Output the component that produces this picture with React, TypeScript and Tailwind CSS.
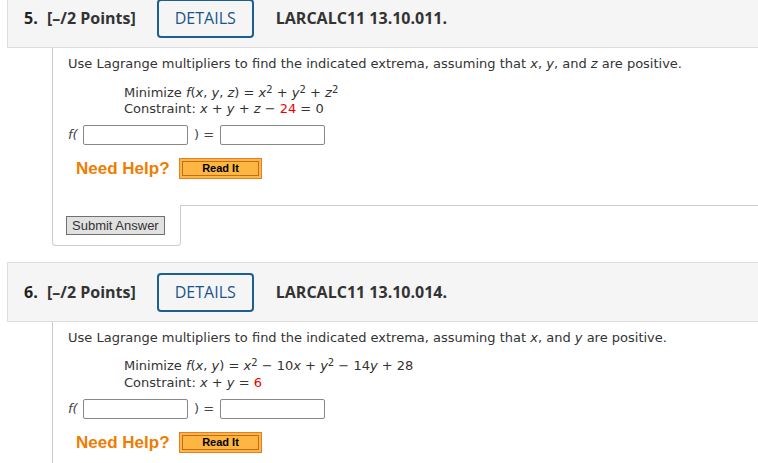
import type { ReactNode } from 'react'

const body = { fontFamily: '"DejaVu Sans", Verdana, sans-serif' }
const head = { fontFamily: '"Open Sans", "Liberation Sans", sans-serif' }
const arial = { fontFamily: '"Liberation Sans", Arial, sans-serif' }

function I({ children }: { children: ReactNode }) {
  return <i>{children}</i>
}

function Sup({ children }: { children: ReactNode }) {
  return <sup className="text-[10px] leading-none relative -top-[4px]">{children}</sup>
}

function Red({ children }: { children: ReactNode }) {
  return <span className="text-[#ee0000]">{children}</span>
}

function Header({ num, code }: { num: string; code: string }) {
  return (
    <div
      className="ml-[7px] h-[60px] bg-[#f5f5f5] border border-r-0 border-[#dddddd] flex items-center text-[16px] text-[#222]"
      style={head}
    >
      <span className="ml-[16px] font-bold w-[23px]">{num}</span>
      <span className="font-bold text-[#333]">[–/2 Points]</span>
      <span className="ml-[21px] w-[97px] h-[39px] border-2 border-[#1c5f92] rounded-[4px] flex items-center justify-center text-[#1a5589]">
        DETAILS
      </span>
      <span className="ml-[22px] font-bold text-[#333]">{code}</span>
    </div>
  )
}

function AnswerRow() {
  return (
    <div className="flex items-center h-[20px] ml-[15px] text-[13px] text-[#444]" style={body}>
      <span className="italic w-[15px]">f(</span>
      <span className="w-[105px] h-[20px] border border-[#888] rounded-[2px] bg-white" />
      <span className="ml-[6px] w-[26px]">) =</span>
      <span className="w-[105px] h-[20px] border border-[#888] rounded-[2px] bg-white" />
    </div>
  )
}

function HelpRow() {
  return (
    <div className="flex items-center h-[21px] ml-[23px]" style={arial}>
      <span className="text-[17px] leading-[21px] font-bold text-[#ee7d00] w-[103px]">Need Help?</span>
      <span className="w-[83px] h-[21px] bg-[#fdb642] border border-[#e0812a] p-[2px]">
        <span className="w-full h-full border border-[#c56c1a] flex items-center justify-center text-[11px] font-bold text-black">
          Read It
        </span>
      </span>
    </div>
  )
}

export default function App() {
  return (
    <div className="w-[758px] h-[463px] overflow-hidden bg-white">
      <div className="-mt-[12px]">
        <Header num="5." code="LARCALC11 13.10.011." />
        <div className="ml-[52px] border-l border-[#cccccc] pt-[8px]">
          <div className="text-[13px] leading-[16px] text-[#333] pl-[15px]" style={body}>
            Use Lagrange multipliers to find the indicated extrema, assuming that <I>x</I>, <I>y</I>, and <I>z</I> are
            positive.
          </div>
          <div className="mt-[13px] pl-[71px] text-[13px] leading-[16px] text-[#333]" style={body}>
            <div>
              Minimize <I>f</I>(<I>x</I>, <I>y</I>, <I>z</I>) = <I>x</I>
              <Sup>2</Sup> + <I>y</I>
              <Sup>2</Sup> + <I>z</I>
              <Sup>2</Sup>
            </div>
            <div>
              Constraint: <I>x</I> + <I>y</I> + <I>z</I> − <Red>24</Red> = 0
            </div>
          </div>
          <div className="mt-[8px]">
            <AnswerRow />
          </div>
          <div className="mt-[13px]">
            <HelpRow />
          </div>
          <div className="h-[26px]" />
        </div>
        <div className="flex">
          <div className="ml-[52px] w-[129px] h-[41px] border border-t-0 border-[#cccccc] rounded-b-[4px] flex items-center pl-[13px]">
            <span
              className="h-[19px] px-[5px] bg-[#e1e1e1] border border-[#707070] text-[13px] leading-[17px] text-[#333]"
              style={arial}
            >
              Submit Answer
            </span>
          </div>
          <div className="flex-1 border-t border-[#cccccc] -ml-px" />
        </div>
        <div className="h-[16px]" />
        <Header num="6." code="LARCALC11 13.10.014." />
        <div className="ml-[52px] border-l border-[#cccccc] pt-[8px] h-[200px]">
          <div className="text-[13px] leading-[16px] text-[#333] pl-[15px]" style={body}>
            Use Lagrange multipliers to find the indicated extrema, assuming that <I>x</I>, and <I>y</I> are positive.
          </div>
          <div className="mt-[11px] pl-[71px] text-[13px] leading-[17px] text-[#333]" style={body}>
            <div>
              Minimize <I>f</I>(<I>x</I>, <I>y</I>) = <I>x</I>
              <Sup>2</Sup> − 10<I>x</I> + <I>y</I>
              <Sup>2</Sup> − 14<I>y</I> + 28
            </div>
            <div>
              Constraint: <I>x</I> + <I>y</I> = <Red>6</Red>
            </div>
          </div>
          <div className="mt-[8px]">
            <AnswerRow />
          </div>
          <div className="mt-[13px]">
            <HelpRow />
          </div>
        </div>
      </div>
    </div>
  )
}
